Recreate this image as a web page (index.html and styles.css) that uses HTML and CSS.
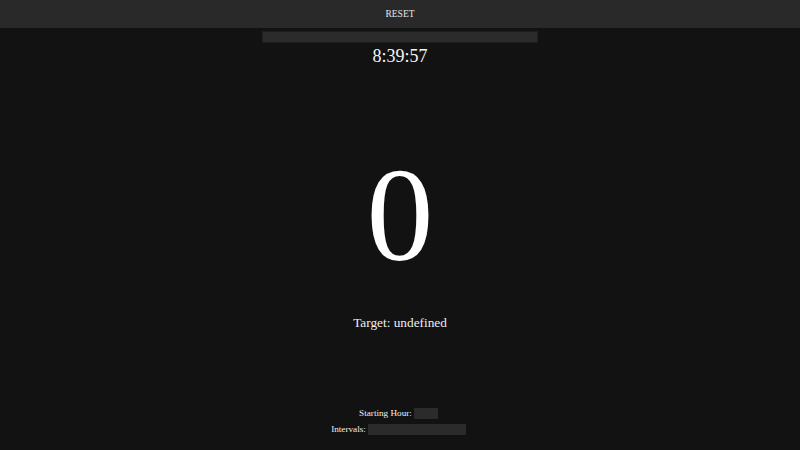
FILE: index.html
```html
<!DOCTYPE html>
<html>
<head>
<meta charset="utf-8">
<link rel="stylesheet" href="styles.css">
</head>
<body>
<div class="page">
  <header class="header"><span class="reset">RESET</span></header>
  <div class="bar"></div>
  <div class="clock">8:39:57</div>
  <div class="count">0</div>
  <div class="target">Target: undefined</div>
  <div class="settings">
    <div class="row"><label class="label">Starting Hour:</label><span class="input short"></span></div>
    <div class="row"><label class="label">Intervals:</label><span class="input long"></span></div>
  </div>
</div>
</body>
</html>
```
FILE: styles.css
```css
html, body {
  margin: 0;
  padding: 0;
  background: #121212;
}
body {
  font-family: "Liberation Serif", "Times New Roman", serif;
  color: #ffffff;
}
.page {
  height: 450px;
  display: flex;
  flex-direction: column;
  align-items: center;
}
.header {
  align-self: stretch;
  height: 28px;
  background: #292929;
  display: flex;
  align-items: center;
  justify-content: center;
}
.reset {
  font-size: 9.5px;
  color: #e4e4e4;
}
.bar {
  margin-top: 3px;
  width: 276px;
  height: 12px;
  box-sizing: border-box;
  background: #2b2b2b;
  border: 1px solid #1e1e1e;
}
.clock {
  margin-top: 4px;
  font-size: 18px;
  line-height: 18px;
  color: #f4f4f4;
}
.count {
  margin-top: 83px;
  font-size: 134px;
  line-height: 134px;
  color: #ffffff;
}
.target {
  margin-top: 33px;
  font-size: 13.3px;
  color: #eeeeee;
}
.settings {
  margin-top: auto;
  padding-bottom: 13px;
  display: flex;
  flex-direction: column;
  align-items: center;
}
.row {
  height: 16px;
  display: flex;
  align-items: center;
  gap: 2px;
  padding-right: 3px;
}
.label {
  font-size: 9.2px;
  color: #f0f0f0;
}
.input {
  height: 11px;
  background: #2b2b2b;
}
.short { width: 24px; }
.long { width: 98px; }
```
